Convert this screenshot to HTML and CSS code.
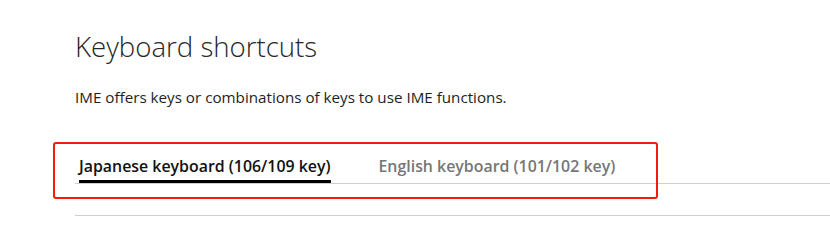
FILE: index.html
```html
<!DOCTYPE html>
<html lang="en">
<head>
    <meta charset="UTF-8">
    <title>Keyboard shortcuts</title>
    <link rel="stylesheet" href="styles.css">
</head>
<body>
    <div class="page">
        <h1 class="title">Keyboard shortcuts</h1>
        <p class="intro">IME offers keys or combinations of keys to use IME functions.</p>

        <div class="tabs">
            <div class="tab active">Japanese keyboard (106/109 key)</div>
            <div class="tab">English keyboard (101/102 key)</div>
        </div>
        <div class="divider"></div>

        <div class="highlight"></div>
    </div>
</body>
</html>
```

FILE: styles.css
```css
body {
    margin: 0;
    background: #fff;
    font-family: "Open Sans", "Noto Sans", sans-serif;
    color: #1a1a1a;
}

.page {
    position: relative;
    padding-left: 75px;
    height: 230px;
    overflow: hidden;
}

.title {
    margin: 0;
    padding-top: 26px;
    font-size: 27.6px;
    font-weight: 300;
    line-height: 40px;
    color: #262626;
}

.intro {
    margin: 0;
    padding-top: 21px;
    font-size: 15.2px;
    line-height: 20px;
    color: #1e1e1e;
}

.tabs {
    display: flex;
    gap: 48px;
    margin-top: 49px;
    padding-left: 4px;
    border-bottom: 1px solid #cfcfcf;
}

.tab {
    font-size: 15.9px;
    font-weight: 600;
    line-height: 20px;
    padding-bottom: 4px;
    color: #767676;
    border-bottom: 3px solid transparent;
}

.tab.active {
    color: #111;
    border-bottom-color: #000;
}

.divider {
    margin-top: 31px;
    border-top: 1px solid #cfcfcf;
}

/* annotation box drawn over the tabs */
.highlight {
    position: absolute;
    left: 53px;
    top: 142px;
    width: 601px;
    height: 53px;
    border: 2.5px solid #f41a14;
    border-radius: 3px;
}
```
